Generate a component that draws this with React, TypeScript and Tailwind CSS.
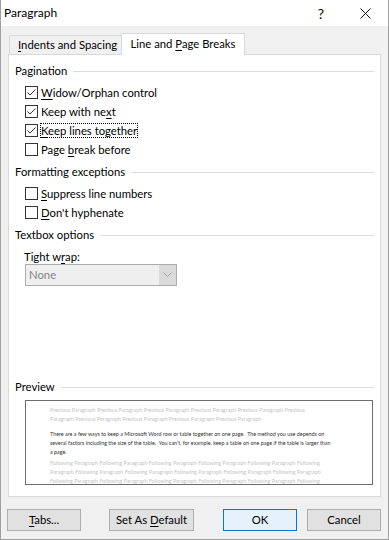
import React from "react";

const font = { fontFamily: 'Lato, "Liberation Sans", sans-serif' };

function Check({ checked }: { checked?: boolean }) {
  return (
    <div className="w-[13px] h-[13px] border border-[#333333] bg-white flex items-center justify-center shrink-0">
      {checked && (
        <svg width="11" height="11" viewBox="0 0 11 11">
          <polyline
            points="1.5,5.5 4,8 9.5,2.5"
            fill="none"
            stroke="#333333"
            strokeWidth="1"
          />
        </svg>
      )}
    </div>
  );
}

function Row({
  checked,
  focus,
  children,
}: {
  checked?: boolean;
  focus?: boolean;
  children: React.ReactNode;
}) {
  return (
    <div className="h-[19px] flex items-center pl-[16px]">
      <Check checked={checked} />
      <span
        className={
          "ml-[3px] leading-[13px] text-black whitespace-nowrap" +
          (focus ? " outline outline-1 outline-dotted outline-black" : "")
        }
      >
        {children}
      </span>
    </div>
  );
}

function Header({ label, className = "" }: { label: string; className?: string }) {
  return (
    <div className={"h-[16px] flex items-center pl-[6px] pr-[6px] " + className}>
      <span className="text-black leading-[16px] whitespace-nowrap">{label}</span>
      <div className="flex-1 h-px bg-[#dcdcdc] ml-[6px]" />
    </div>
  );
}

const U = ({ children }: { children: React.ReactNode }) => (
  <span className="underline underline-offset-2 decoration-1">{children}</span>
);

function Button({
  children,
  primary,
  className = "",
}: {
  children: React.ReactNode;
  primary?: boolean;
  className?: string;
}) {
  return (
    <div
      className={
        "h-[22px] flex items-center justify-center border text-black whitespace-nowrap " +
        (primary ? "bg-[#e5f1fb] border-[#0078d7] " : "bg-[#e1e1e1] border-[#adadad] ") +
        className
      }
    >
      {children}
    </div>
  );
}

export default function App() {
  const prev = "text-[#c4c4c4]";
  return (
    <div
      className="w-[389px] h-[540px] bg-[#f0f0f0] border-x border-b border-[#a0a0a0] text-[11.3px] flex flex-col overflow-hidden"
      style={font}
    >
      {/* title bar */}
      <div className="h-[26px] bg-white flex items-center shrink-0">
        <span className="ml-[3px] text-black text-[12px]">Paragraph</span>
        <span className="ml-auto text-black text-[14px] mr-[36px]">?</span>
        <svg width="11" height="11" viewBox="0 0 11 11" className="mr-[17px]">
          <path d="M0.5 0.5 L10.5 10.5 M10.5 0.5 L0.5 10.5" stroke="#111" strokeWidth="1" />
        </svg>
      </div>

      {/* tabs */}
      <div className="flex items-end ml-[8px] mt-[7px] h-[21px] shrink-0">
        <div className="w-[112px] h-[19px] border border-r-0 border-b-0 border-[#d9d9d9] bg-[#f0f0f0] flex items-center pl-[8px] text-black whitespace-nowrap">
          <span>
            <U>I</U>ndents and Spacing
          </span>
        </div>
        <div className="w-[124px] h-[22px] -mb-px relative z-10 border border-b-0 border-[#d9d9d9] bg-white flex items-center justify-center text-black whitespace-nowrap">
          <span>
            Line and <U>P</U>age Breaks
          </span>
        </div>
      </div>

      {/* panel */}
      <div className="ml-[7px] w-[373px] h-[443px] border border-[#d9d9d9] bg-white flex flex-col shrink-0">
        <Header label="Pagination" className="mt-[8px]" />
        <div className="mt-[4px]">
          <Row checked>
            <U>W</U>idow/Orphan control
          </Row>
          <Row checked>
            Keep with ne<U>x</U>t
          </Row>
          <Row checked focus>
            <U>K</U>eep lines together
          </Row>
          <Row>
            Page <U>b</U>reak before
          </Row>
        </div>

        <Header label="Formatting exceptions" className="mt-[5px]" />
        <div className="mt-[4px]">
          <Row>
            <U>S</U>uppress line numbers
          </Row>
          <Row>
            <U>D</U>on't hyphenate
          </Row>
        </div>

        <Header label="Textbox options" className="mt-[5px]" />
        <div className="mt-[7px] h-[14px] flex items-center pl-[15px] text-black">
          <span>
            Tight w<U>r</U>ap:
          </span>
        </div>
        <div className="ml-[16px] w-[152px] h-[22px] border border-[#adadad] bg-[#efefef] flex items-center">
          <span className="pl-[3px] text-[#838383] flex-1">None</span>
          <div className="w-[17px] h-full bg-[#dadada] flex items-center justify-center">
            <svg width="9" height="6" viewBox="0 0 9 6">
              <polyline points="0.5,0.5 4.5,4.5 8.5,0.5" fill="none" stroke="#a0a0a0" strokeWidth="1" />
            </svg>
          </div>
        </div>

        <Header label="Preview" className="mt-[93px]" />
        <div
          className="ml-[16px] mt-[5px] w-[348px] h-[85px] border border-[#6d6d6d] bg-white overflow-hidden pl-[24px] pt-[5px] text-[5.4px] leading-[9px] whitespace-nowrap"
          style={{ fontFamily: 'Lato, "Liberation Sans", sans-serif' }}
        >
          <div className={prev}>
            Previous Paragraph Previous Paragraph Previous Paragraph Previous Paragraph Previous Paragraph Previous
          </div>
          <div className={prev}>
            Paragraph Previous Paragraph Previous Paragraph Previous Paragraph Previous Paragraph
          </div>
          <div className="mt-[6px] text-[#333333]">
            There are a few ways to keep a Microsoft Word row or table together on one page.&nbsp; The method you use depends on
          </div>
          <div className="text-[#333333]">
            several factors including the size of the table.&nbsp; You can’t, for example, keep a table on one page if the table is larger than
          </div>
          <div className="text-[#333333]">a page.</div>
          <div className={"mt-[2px] " + prev}>
            Following Paragraph Following Paragraph Following Paragraph Following Paragraph Following Paragraph Following
          </div>
          <div className={prev}>
            Paragraph Following Paragraph Following Paragraph Following Paragraph Following Paragraph Following Paragraph
          </div>
          <div className={prev}>
            Following Paragraph Following Paragraph Following Paragraph Following Paragraph Following Paragraph Following
          </div>
        </div>
      </div>

      {/* buttons */}
      <div className="flex mt-[12px] shrink-0">
        <Button className="ml-[6px] w-[74px]">
          <span>
            <U>T</U>abs...
          </span>
        </Button>
        <Button className="ml-[28px] w-[85px]">
          <span>
            Set As <U>D</U>efault
          </span>
        </Button>
        <Button primary className="ml-[29px] w-[74px]">
          OK
        </Button>
        <Button className="ml-[10px] w-[74px]">Cancel</Button>
      </div>
    </div>
  );
}
